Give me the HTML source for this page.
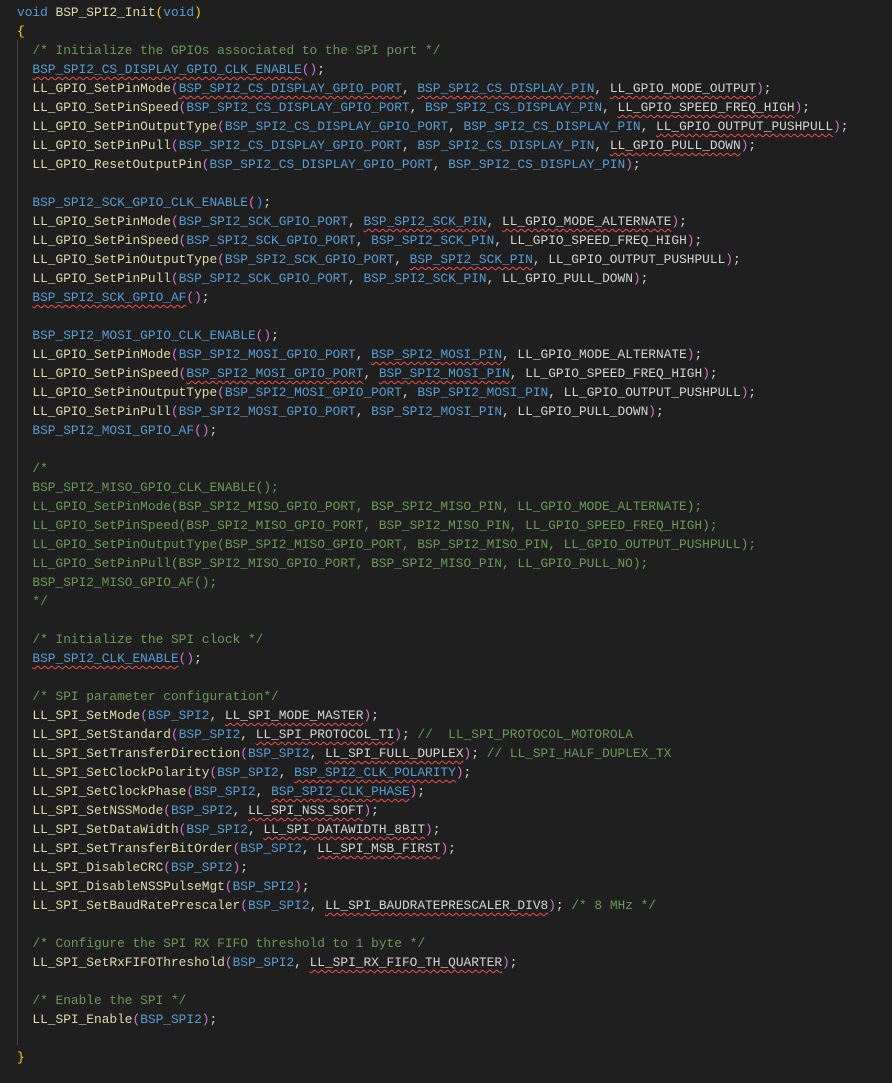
<!DOCTYPE html>
<html><head><meta charset="utf-8"><style>
html,body{margin:0;padding:0;background:#1f1f1f;width:892px;height:1083px;overflow:hidden}
pre{margin:0;position:absolute;left:17px;top:3px;font-family:"Liberation Mono",monospace;font-size:12.84px;line-height:19px;color:#d4d4d4}
.g{position:absolute;left:17px;top:40px;width:1px;height:1005px;background:#404040}
.k{color:#569cd6}.b{color:#569cd6}.f{color:#dcdcaa}.c{color:#6a9955}
.y{color:#ffd700}.p{color:#da70d6}.q{color:#179fff}
.s{text-decoration:underline wavy #f14c4c;text-decoration-thickness:1px;text-underline-offset:3px}
</style></head><body><div class="g"></div>
<pre><span class="k">void</span> <span class="f">BSP_SPI2_Init</span><span class="y">(</span><span class="k">void</span><span class="y">)</span>
<span class="y">{</span>
  <span class="c">/* Initialize the GPIOs associated to the SPI port */</span>
  <span class="b s">BSP_SPI2_CS_DISPLAY_GPIO_CLK_ENABLE</span><span class="p">()</span>;
  <span class="f">LL_GPIO_SetPinMode</span><span class="p">(</span><span class="b s">BSP_SPI2_CS_DISPLAY_GPIO_PORT</span>, <span class="b s">BSP_SPI2_CS_DISPLAY_PIN</span>, <span class="s">LL_GPIO_MODE_OUTPUT</span><span class="p">)</span>;
  <span class="f">LL_GPIO_SetPinSpeed</span><span class="p">(</span><span class="b">BSP_SPI2_CS_DISPLAY_GPIO_PORT</span>, <span class="b">BSP_SPI2_CS_DISPLAY_PIN</span>, <span class="s">LL_GPIO_SPEED_FREQ_HIGH</span><span class="p">)</span>;
  <span class="f">LL_GPIO_SetPinOutputType</span><span class="p">(</span><span class="b">BSP_SPI2_CS_DISPLAY_GPIO_PORT</span>, <span class="b">BSP_SPI2_CS_DISPLAY_PIN</span>, <span class="s">LL_GPIO_OUTPUT_PUSHPULL</span><span class="p">)</span>;
  <span class="f">LL_GPIO_SetPinPull</span><span class="p">(</span><span class="b">BSP_SPI2_CS_DISPLAY_GPIO_PORT</span>, <span class="b">BSP_SPI2_CS_DISPLAY_PIN</span>, <span class="s">LL_GPIO_PULL_DOWN</span><span class="p">)</span>;
  <span class="f">LL_GPIO_ResetOutputPin</span><span class="p">(</span><span class="b">BSP_SPI2_CS_DISPLAY_GPIO_PORT</span>, <span class="b">BSP_SPI2_CS_DISPLAY_PIN</span><span class="p">)</span>;

  <span class="b">BSP_SPI2_SCK_GPIO_CLK_ENABLE</span><span class="p">(</span><span class="q">)</span>;
  <span class="f">LL_GPIO_SetPinMode</span><span class="p">(</span><span class="b">BSP_SPI2_SCK_GPIO_PORT</span>, <span class="b s">BSP_SPI2_SCK_PIN</span>, <span class="s">LL_GPIO_MODE_ALTERNATE</span><span class="p">)</span>;
  <span class="f">LL_GPIO_SetPinSpeed</span><span class="p">(</span><span class="b">BSP_SPI2_SCK_GPIO_PORT</span>, <span class="b">BSP_SPI2_SCK_PIN</span>, LL_GPIO_SPEED_FREQ_HIGH<span class="p">)</span>;
  <span class="f">LL_GPIO_SetPinOutputType</span><span class="p">(</span><span class="b">BSP_SPI2_SCK_GPIO_PORT</span>, <span class="b s">BSP_SPI2_SCK_PIN</span>, LL_GPIO_OUTPUT_PUSHPULL<span class="p">)</span>;
  <span class="f">LL_GPIO_SetPinPull</span><span class="p">(</span><span class="b">BSP_SPI2_SCK_GPIO_PORT</span>, <span class="b">BSP_SPI2_SCK_PIN</span>, LL_GPIO_PULL_DOWN<span class="p">)</span>;
  <span class="b s">BSP_SPI2_SCK_GPIO_AF</span><span class="p">()</span>;

  <span class="b">BSP_SPI2_MOSI_GPIO_CLK_ENABLE</span><span class="p">()</span>;
  <span class="f">LL_GPIO_SetPinMode</span><span class="p">(</span><span class="b">BSP_SPI2_MOSI_GPIO_PORT</span>, <span class="b s">BSP_SPI2_MOSI_PIN</span>, LL_GPIO_MODE_ALTERNATE<span class="p">)</span>;
  <span class="f">LL_GPIO_SetPinSpeed</span><span class="p">(</span><span class="b s">BSP_SPI2_MOSI_GPIO_PORT</span>, <span class="b s">BSP_SPI2_MOSI_PIN</span>, LL_GPIO_SPEED_FREQ_HIGH<span class="p">)</span>;
  <span class="f">LL_GPIO_SetPinOutputType</span><span class="p">(</span><span class="b">BSP_SPI2_MOSI_GPIO_PORT</span>, <span class="b">BSP_SPI2_MOSI_PIN</span>, LL_GPIO_OUTPUT_PUSHPULL<span class="p">)</span>;
  <span class="f">LL_GPIO_SetPinPull</span><span class="p">(</span><span class="b">BSP_SPI2_MOSI_GPIO_PORT</span>, <span class="b">BSP_SPI2_MOSI_PIN</span>, LL_GPIO_PULL_DOWN<span class="p">)</span>;
  <span class="b">BSP_SPI2_MOSI_GPIO_AF</span><span class="p">()</span>;

<span class="c">  /*
  BSP_SPI2_MISO_GPIO_CLK_ENABLE();
  LL_GPIO_SetPinMode(BSP_SPI2_MISO_GPIO_PORT, BSP_SPI2_MISO_PIN, LL_GPIO_MODE_ALTERNATE);
  LL_GPIO_SetPinSpeed(BSP_SPI2_MISO_GPIO_PORT, BSP_SPI2_MISO_PIN, LL_GPIO_SPEED_FREQ_HIGH);
  LL_GPIO_SetPinOutputType(BSP_SPI2_MISO_GPIO_PORT, BSP_SPI2_MISO_PIN, LL_GPIO_OUTPUT_PUSHPULL);
  LL_GPIO_SetPinPull(BSP_SPI2_MISO_GPIO_PORT, BSP_SPI2_MISO_PIN, LL_GPIO_PULL_NO);
  BSP_SPI2_MISO_GPIO_AF();
  */</span>

  <span class="c">/* Initialize the SPI clock */</span>
  <span class="b s">BSP_SPI2_CLK_ENABLE</span><span class="p">()</span>;

  <span class="c">/* SPI parameter configuration*/</span>
  <span class="f">LL_SPI_SetMode</span><span class="p">(</span><span class="b">BSP_SPI2</span>, <span class="s">LL_SPI_MODE_MASTER</span><span class="p">)</span>;
  <span class="f">LL_SPI_SetStandard</span><span class="p">(</span><span class="b">BSP_SPI2</span>, <span class="s">LL_SPI_PROTOCOL_TI</span><span class="p">)</span>; <span class="c">//  LL_SPI_PROTOCOL_MOTOROLA</span>
  <span class="f">LL_SPI_SetTransferDirection</span><span class="p">(</span><span class="b">BSP_SPI2</span>, <span class="s">LL_SPI_FULL_DUPLEX</span><span class="p">)</span>; <span class="c">// LL_SPI_HALF_DUPLEX_TX</span>
  <span class="f">LL_SPI_SetClockPolarity</span><span class="p">(</span><span class="b">BSP_SPI2</span>, <span class="b s">BSP_SPI2_CLK_POLARITY</span><span class="p">)</span>;
  <span class="f">LL_SPI_SetClockPhase</span><span class="p">(</span><span class="b">BSP_SPI2</span>, <span class="b s">BSP_SPI2_CLK_PHASE</span><span class="p">)</span>;
  <span class="f">LL_SPI_SetNSSMode</span><span class="p">(</span><span class="b">BSP_SPI2</span>, <span class="s">LL_SPI_NSS_SOFT</span><span class="p">)</span>;
  <span class="f">LL_SPI_SetDataWidth</span><span class="p">(</span><span class="b">BSP_SPI2</span>, <span class="s">LL_SPI_DATAWIDTH_8BIT</span><span class="p">)</span>;
  <span class="f">LL_SPI_SetTransferBitOrder</span><span class="p">(</span><span class="b">BSP_SPI2</span>, <span class="s">LL_SPI_MSB_FIRST</span><span class="p">)</span>;
  <span class="f">LL_SPI_DisableCRC</span><span class="p">(</span><span class="b">BSP_SPI2</span><span class="p">)</span>;
  <span class="f">LL_SPI_DisableNSSPulseMgt</span><span class="p">(</span><span class="b">BSP_SPI2</span><span class="p">)</span>;
  <span class="f">LL_SPI_SetBaudRatePrescaler</span><span class="p">(</span><span class="b">BSP_SPI2</span>, <span class="s">LL_SPI_BAUDRATEPRESCALER_DIV8</span><span class="p">)</span>; <span class="c">/* 8 MHz */</span>

  <span class="c">/* Configure the SPI RX FIFO threshold to 1 byte */</span>
  <span class="f">LL_SPI_SetRxFIFOThreshold</span><span class="p">(</span><span class="b">BSP_SPI2</span>, <span class="s">LL_SPI_RX_FIFO_TH_QUARTER</span><span class="p">)</span>;

  <span class="c">/* Enable the SPI */</span>
  <span class="f">LL_SPI_Enable</span><span class="p">(</span><span class="b">BSP_SPI2</span><span class="p">)</span>;

<span class="y">}</span>
</pre></body></html>
